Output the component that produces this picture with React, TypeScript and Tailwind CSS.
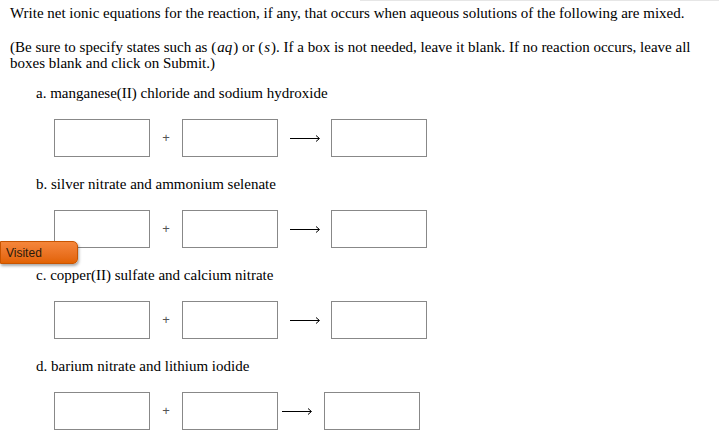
import React from "react";

const parts = [
  { label: "a. manganese(II) chloride and sodium hydroxide", tight: false },
  { label: "b. silver nitrate and ammonium selenate", tight: false },
  { label: "c. copper(II) sulfate and calcium nitrate", tight: false },
  { label: "d. barium nitrate and lithium iodide", tight: true },
];

function Box() {
  return <input type="text" className="w-[96px] h-[38px] border border-[#888] bg-white outline-none" />;
}

export default function App() {
  return (
    <div className="relative w-[719px] h-[438px] bg-white text-[15px] leading-[16px] text-black overflow-hidden" style={{ fontFamily: '"Liberation Serif", "Times New Roman", serif' }}>
      <div className="h-px ml-[360px] bg-[#e6e6e6]" />
      <div className="pl-[10px] pt-[4px]">
        <p className="whitespace-nowrap">Write net ionic equations for the reaction, if any, that occurs when aqueous solutions of the following are mixed.</p>
        <p className="mt-[18px] w-[690px]">
          (Be sure to specify states such as (<i className="px-[1px]">aq</i>) or (<i className="px-[1px]">s</i>). If a box is not needed, leave it blank. If no reaction occurs, leave all boxes blank and click on Submit.)
        </p>
        <div className="pl-[26px] pt-[14px] flex flex-col">
          {parts.map((p) => (
            <div key={p.label} className="flex flex-col">
              <div className="h-[16px]">{p.label}</div>
              <div className="flex items-center pl-[18px] mt-[18px] mb-[19px]">
                <Box />
                <span className="w-[32px] text-center text-[13px] text-[#555]" style={{ fontFamily: '"Liberation Sans", Arial, sans-serif' }}>+</span>
                <Box />
                <span className={p.tight ? "ml-[4px] mr-[12px]" : "ml-[12px] mr-[11px]"}>
                  <svg width="30" height="8" viewBox="0 0 30 8">
                    <path d="M0 4.5H29" stroke="#000" strokeWidth="1" />
                    <path d="M26 1.5L29.5 4.5L26 7.5" stroke="#000" strokeWidth="1" fill="none" />
                  </svg>
                </span>
                <Box />
              </div>
            </div>
          ))}
        </div>
      </div>
      <div
        className="absolute left-0 top-[241px] w-[78px] h-[23px] rounded-r-[5px] border border-[#c85400] bg-gradient-to-b from-[#f5863a] to-[#e26200] shadow-[1px_2px_3px_rgba(0,0,0,0.35)] pl-[5px] flex items-center text-[12px] text-[#2a1a0a]"
        style={{ fontFamily: '"Liberation Sans", Arial, sans-serif' }}
      >
        Visited
      </div>
    </div>
  );
}
